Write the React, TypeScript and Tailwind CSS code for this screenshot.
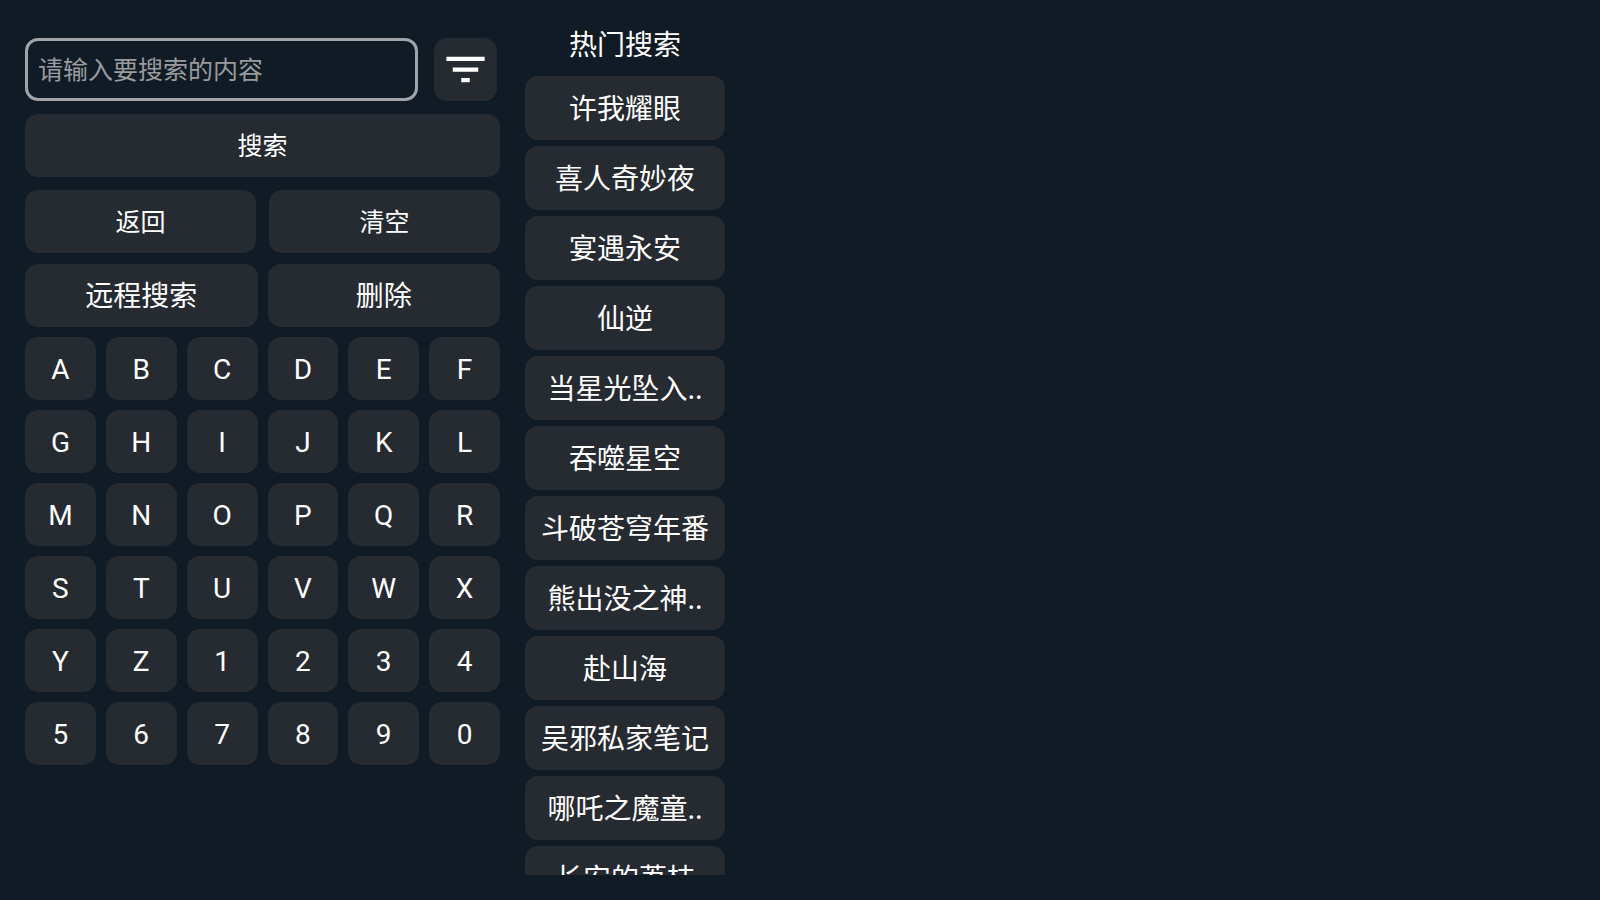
import { useRef, useState } from "react";
import type { ReactNode } from "react";
import { MdFilterList } from "react-icons/md";

const keys = "ABCDEFGHIJKLMNOPQRSTUVWXYZ1234567890".split("");

const hotSearches = [
  "许我耀眼",
  "喜人奇妙夜",
  "宴遇永安",
  "仙逆",
  "当星光坠入..",
  "吞噬星空",
  "斗破苍穹年番",
  "熊出没之神..",
  "赴山海",
  "吴邪私家笔记",
  "哪吒之魔童..",
  "长安的荔枝",
];

type PadButtonProps = {
  children: ReactNode;
  onClick?: () => void;
  small?: boolean;
};

function PadButton({ children, onClick, small = false }: PadButtonProps) {
  return (
    <button
      type="button"
      onClick={onClick}
      className={`flex h-[63px] w-full items-center justify-center rounded-[13px] bg-[#262a31] pt-[2px] leading-none hover:bg-[#30353d] ${
        small ? "text-[25px]" : "text-[28px]"
      }`}
    >
      {children}
    </button>
  );
}

export default function App() {
  const [query, setQuery] = useState("");
  const inputRef = useRef<HTMLInputElement>(null);

  return (
    <main className="flex h-screen gap-[25px] overflow-hidden bg-[#111b26] p-[25px] font-['Roboto','Noto_Sans_CJK_SC',sans-serif] text-white">
      <section className="w-[475px] shrink-0 pt-[13px]" aria-label="搜索">
        <div className="flex gap-4 pr-[3px]">
          <input
            ref={inputRef}
            type="text"
            aria-label="搜索内容"
            placeholder="请输入要搜索的内容"
            value={query}
            onChange={(e) => setQuery(e.target.value)}
            className="h-[63px] min-w-0 flex-1 rounded-[13px] border-[3px] border-[#a0a4a8] bg-transparent px-[10px] pt-[2px] text-[25px] outline-none placeholder:text-[#999b9e]"
          />
          <button
            type="button"
            aria-label="筛选"
            className="flex size-[63px] shrink-0 items-center justify-center rounded-[13px] bg-[#262a31] hover:bg-[#30353d]"
          >
            <MdFilterList size={51} />
          </button>
        </div>

        <div className="mt-[13px] grid grid-cols-2 gap-[13px]">
          <div className="col-span-2">
            <PadButton small onClick={() => inputRef.current?.focus()}>
              搜索
            </PadButton>
          </div>
          <PadButton small>返回</PadButton>
          <PadButton small onClick={() => setQuery("")}>
            清空
          </PadButton>
        </div>

        <div className="mt-[11px] grid grid-cols-2 gap-[10px]">
          <PadButton>远程搜索</PadButton>
          <PadButton onClick={() => setQuery((q) => q.slice(0, -1))}>删除</PadButton>
        </div>

        <div className="mt-[10px] grid grid-cols-6 gap-[10px]">
          {keys.map((key) => (
            <PadButton key={key} onClick={() => setQuery((q) => q + key)}>
              {key}
            </PadButton>
          ))}
        </div>
      </section>

      <section className="h-full w-[200px] shrink-0 overflow-y-auto font-['Noto_Sans','Noto_Sans_CJK_SC',sans-serif] [scrollbar-width:none]">
        <h2 className="text-center text-[28px] leading-[38px]">热门搜索</h2>
        <ul className="mt-[13px] flex flex-col gap-[6px]">
          {hotSearches.map((title) => (
            <li key={title}>
              <button
                type="button"
                onClick={() => setQuery(title)}
                className="flex h-16 w-full items-center justify-center whitespace-nowrap rounded-[13px] bg-[#262a31] text-[28px] leading-none hover:bg-[#30353d]"
              >
                {title}
              </button>
            </li>
          ))}
        </ul>
      </section>
    </main>
  );
}
